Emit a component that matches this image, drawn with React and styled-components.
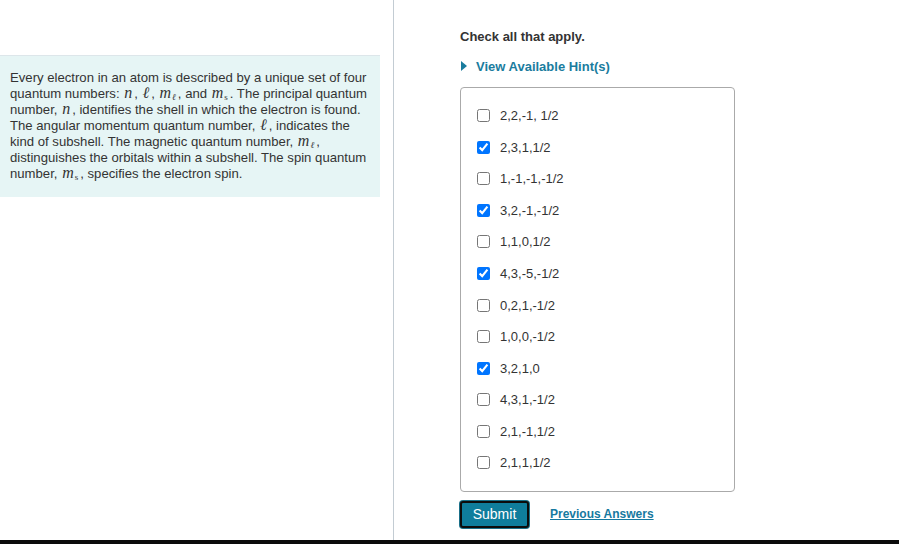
import React from "react";
import styled, { createGlobalStyle } from "styled-components";

const Global = createGlobalStyle`
  html, body { margin: 0; padding: 0; background: #fff; }
  body { font-family: "Liberation Sans", Arial, sans-serif; color: #333; }
`;

const Page = styled.div`
  width: 899px;
  height: 544px;
  display: flex;
  flex-direction: column;
  overflow: hidden;
`;

const Main = styled.div`
  flex: 1;
  display: flex;
  min-height: 0;
`;

const BottomBar = styled.div`
  height: 4px;
  background: #0b0b0b;
`;

const LeftCol = styled.div`
  width: 393px;
  border-right: 1px solid #c3ccd3;
  padding-top: 55px;
  box-sizing: content-box;
`;

const InfoPanel = styled.div`
  width: 380px;
  box-sizing: border-box;
  background: #e6f5f5;
  border-top: 1px solid #dde6ea;
  padding: 14px 8px 15px 10px;
  font-size: 13.15px;
  line-height: 16px;
  color: #333;
`;

const M = styled.span`
  font-family: "Liberation Serif", "Times New Roman", serif;
  font-style: italic;
  font-size: 16px;
  line-height: 0;
  margin: 0 2px 0 1px;
`;

const Sub = styled.span`
  font-size: 9px;
  line-height: 0;
  font-style: ${(p) => (p.$upright ? "normal" : "italic")};
  position: relative;
  top: 2px;
  margin-left: 1px;
`;

const RightCol = styled.div`
  flex: 1;
  padding: 29px 0 0 66px;
  display: flex;
  flex-direction: column;
  align-items: flex-start;
`;

const Instruction = styled.div`
  font-size: 13px;
  font-weight: bold;
  line-height: 16px;
  color: #333;
`;

const Hint = styled.div`
  margin-top: 14px;
  display: flex;
  align-items: center;
  gap: 9px;
  font-size: 13px;
  font-weight: bold;
  line-height: 16px;
  color: #1a7c9e;
  padding-left: 1px;
`;

const Triangle = styled.span`
  width: 0;
  height: 0;
  border-top: 5px solid transparent;
  border-bottom: 5px solid transparent;
  border-left: 6px solid #1a7c9e;
  margin-top: -2px;
`;

const OptionsBox = styled.div`
  margin-top: 12px;
  width: 275px;
  box-sizing: border-box;
  border: 1px solid #aaa;
  border-radius: 4px;
  padding: 12px 0 12px 16px;
  display: flex;
  flex-direction: column;
`;

const Option = styled.label`
  height: 31.55px;
  display: flex;
  align-items: center;
  gap: 10px;
  font-size: 13px;
  color: #333;
`;

const Check = styled.input`
  margin: 0;
  width: 13px;
  height: 13px;
  accent-color: #0075ff;
`;

const Actions = styled.div`
  margin-top: 9px;
  display: flex;
  align-items: center;
  gap: 21px;
`;

const SubmitBtn = styled.button`
  width: 69px;
  height: 27px;
  box-sizing: border-box;
  background: #0f7d9c;
  color: #fff;
  font-family: "Liberation Sans", Arial, sans-serif;
  font-size: 14px;
  border: 2px solid #0c0c0c;
  border-radius: 3px;
  box-shadow: 0 0 0 1px #1a6f88;
  padding: 0;
`;

const PrevLink = styled.a`
  font-size: 12px;
  font-weight: bold;
  color: #1679a0;
  text-decoration: underline;
  cursor: pointer;
`;

const options = [
  ["2,2,-1, 1/2", false],
  ["2,3,1,1/2", true],
  ["1,-1,-1,-1/2", false],
  ["3,2,-1,-1/2", true],
  ["1,1,0,1/2", false],
  ["4,3,-5,-1/2", true],
  ["0,2,1,-1/2", false],
  ["1,0,0,-1/2", false],
  ["3,2,1,0", true],
  ["4,3,1,-1/2", false],
  ["2,1,-1,1/2", false],
  ["2,1,1,1/2", false],
];

export default function App() {
  return (
    <Page>
      <Global />
      <Main>
        <LeftCol>
          <InfoPanel>
            Every electron in an atom is described by a unique set of four
            quantum numbers: <M>n</M>, <M>ℓ</M>, <M>m<Sub>ℓ</Sub></M>, and{" "}
            <M>m<Sub $upright>s</Sub></M>. The principal quantum number, <M>n</M>,
            identifies the shell in which the electron is found. The angular
            momentum quantum number, <M>ℓ</M>, indicates the kind of subshell.
            The magnetic quantum number, <M>m<Sub>ℓ</Sub></M>, distinguishes the
            orbitals within a subshell. The spin quantum number,{" "}
            <M>m<Sub $upright>s</Sub></M>, specifies the electron spin.
          </InfoPanel>
        </LeftCol>
        <RightCol>
          <Instruction>Check all that apply.</Instruction>
          <Hint>
            <Triangle />
            View Available Hint(s)
          </Hint>
          <OptionsBox>
            {options.map(([label, checked]) => (
              <Option key={label}>
                <Check type="checkbox" defaultChecked={checked} />
                {label}
              </Option>
            ))}
          </OptionsBox>
          <Actions>
            <SubmitBtn>Submit</SubmitBtn>
            <PrevLink>Previous Answers</PrevLink>
          </Actions>
        </RightCol>
      </Main>
      <BottomBar />
    </Page>
  );
}
